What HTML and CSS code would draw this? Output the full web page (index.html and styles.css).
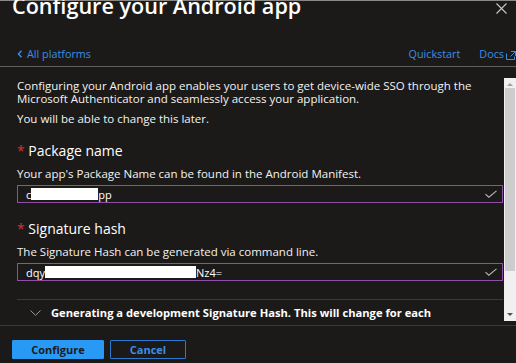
FILE: index.html
```html
<!DOCTYPE html>
<html>
<head>
<meta charset="utf-8">
<link rel="stylesheet" href="styles.css">
</head>
<body>
<div class="panel">
  <div class="header">
    <h1 class="title">Configure your Android app</h1>
    <svg class="close" width="11" height="11" viewBox="0 0 11 11"><path d="M0.5 0.5L10.5 10.5M10.5 0.5L0.5 10.5" stroke="#c8c8c8" stroke-width="1.1" fill="none"/></svg>
  </div>
  <div class="nav">
    <a class="back"><svg width="6" height="8" viewBox="0 0 6 8"><path d="M4.5 0.8L1.5 4L4.5 7.2" stroke="#3a8ee6" stroke-width="1.5" fill="none"/></svg>All platforms</a>
    <span class="spacer"></span>
    <a class="link">Quickstart</a>
    <a class="link docs">Docs<svg width="10" height="9" viewBox="0 0 10 9"><path d="M0.5 2.5V8.5H8.5V5.5M5 0.5H9.5V5M9.5 0.5L4.5 5.5" stroke="#3a8ee6" stroke-width="1" fill="none"/></svg></a>
  </div>
  <div class="body">
    <div class="content">
      <p class="intro">Configuring your Android app enables your users to get device-wide SSO through the Microsoft Authenticator and seamlessly access your application.</p>
      <p class="note">You will be able to change this later.</p>
      <div class="field">
        <div class="label"><span class="req">*</span> Package name</div>
        <div class="hint">Your app's Package Name can be found in the Android Manifest.</div>
        <div class="input"><span>c</span><span class="redact r1"></span><span>pp</span><span class="grow"></span><svg class="check" width="12" height="8" viewBox="0 0 12 8"><path d="M0.5 4.2L3.8 7.2L11.5 0.8" stroke="#b8b8b8" stroke-width="1.1" fill="none"/></svg></div>
      </div>
      <div class="field f2">
        <div class="label"><span class="req">*</span> Signature hash</div>
        <div class="hint">The Signature Hash can be generated via command line.</div>
        <div class="input"><span>dqy</span><span class="redact r2"></span><span>Nz4=</span><span class="grow"></span><svg class="check" width="12" height="8" viewBox="0 0 12 8"><path d="M0.5 4.2L3.8 7.2L11.5 0.8" stroke="#b8b8b8" stroke-width="1.1" fill="none"/></svg></div>
      </div>
      <div class="expander">
        <svg class="chev" width="11" height="6" viewBox="0 0 11 6"><path d="M0.5 0.5L5.5 5.3L10.5 0.5" stroke="#9a9a9a" stroke-width="1" fill="none"/></svg>
        <span>Generating a development Signature Hash. This will change for each</span>
      </div>
    </div>
    <div class="scrollbar">
      <div class="arrow up"></div>
      <div class="thumb"></div>
      <div class="track"></div>
      <div class="arrow down"></div>
    </div>
  </div>
  <div class="footer">
    <button class="btn primary">Configure</button>
    <button class="btn secondary">Cancel</button>
  </div>
</div>
</body>
</html>
```
FILE: styles.css
```css
* { box-sizing: border-box; }
html, body { margin: 0; padding: 0; }
body {
  background: #1b1a19;
  font-family: "Open Sans", "Noto Sans", sans-serif;
  color: #f3f2f1;
  width: 516px;
  height: 363px;
  overflow: hidden;
}
.panel {
  width: 516px;
  height: 363px;
  display: flex;
  flex-direction: column;
  border-top: 1px solid #8a8886;
}
.header {
  display: flex;
  align-items: flex-start;
  padding: 0 9px 0 12px;
  height: 24px;
}
.title {
  margin: -10px 0 0 0;
  font-size: 21.6px;
  font-weight: 600;
  line-height: 30px;
  color: #ffffff;
  flex: 1;
}
.close { margin-top: 2px; }
.nav {
  display: flex;
  align-items: flex-end;
  height: 42px;
  padding: 0 0 5px 17px;
  border-bottom: 1px solid #605e5c;
  font-size: 10.8px;
  line-height: 14px;
  color: #3a8ee6;
}
.nav a { display: flex; align-items: center; }
.back svg { margin-right: 4px; }
.spacer { flex: 1; }
.link { margin-right: 19px; }
.docs { margin-right: 0; }
.docs svg { margin-left: 2px; margin-top: 2px; }
.body {
  flex: 1;
  display: flex;
  min-height: 0;
}
.content {
  flex: 1;
  padding: 12px 0 0 17px;
  font-size: 11.5px;
  line-height: 13px;
}
.intro { margin: 0; max-width: 472px; }
.note { margin: 7px 0 0 0; }
.field { margin-top: 17px; }
.f2 { margin-top: 17px; }
.label { font-size: 14px; line-height: 18px; color: #ffffff; }
.req { color: #d13438; }
.hint { margin-top: 7px; }
.input {
  margin-top: 5px;
  height: 18px;
  border: 1px solid #8e4fa8;
  display: flex;
  align-items: center;
  padding: 0 5px 0 8px;
  font-size: 11px;
  color: #ffffff;
}
.redact { display: inline-block; height: 12px; background: #ffffff; }
.r1 { width: 67px; }
.r2 { width: 151px; }
.grow { flex: 1; }
.expander {
  margin-top: 18px;
  border-top: 1px solid #3b3a39;
  height: 26px;
  display: flex;
  align-items: center;
  padding-left: 13px;
  font-size: 11.2px;
  font-weight: 700;
  color: #ffffff;
}
.chev { margin-right: 10px; }
.scrollbar {
  width: 12px;
  margin: 11px 0 4px 1px;
  background: #f0f0f0;
  display: flex;
  flex-direction: column;
  align-items: center;
}
.arrow { width: 0; height: 0; border-left: 3px solid transparent; border-right: 3px solid transparent; }
.up { margin-top: 5px; border-bottom: 3px solid #a0a0a0; }
.down { margin-bottom: 5px; border-top: 3px solid #505050; }
.thumb { width: 10px; height: 183px; margin-top: 2px; background: #cdcdcd; }
.track { flex: 1; }
.footer {
  height: 38px;
  border-top: 1px solid #3b3a39;
  display: flex;
  align-items: flex-start;
  padding: 14px 0 0 12px;
  gap: 6px;
}
.btn {
  height: 19px;
  font-family: "Open Sans", "Noto Sans", sans-serif;
  font-size: 11px;
  font-weight: 700;
  padding: 0;
  border-radius: 1px;
}
.primary { width: 92px; background: #2899f5; border: 1px solid #2899f5; color: #1b1a19; }
.secondary { width: 76px; background: transparent; border: 1px solid #2b7ad0; color: #3a8ee6; }
```
